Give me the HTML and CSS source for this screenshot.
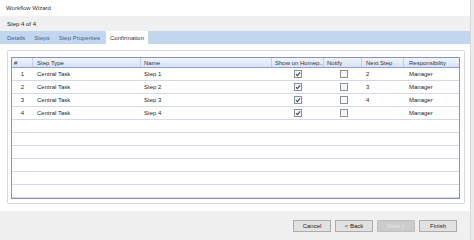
FILE: index.html
```html
<!DOCTYPE html>
<html>
<head>
<meta charset="utf-8">
<link rel="stylesheet" href="styles.css">
</head>
<body>
<div class="window">
  <div class="main">
    <div class="titlebar">Workflow Wizard</div>
    <div class="stepband">Step 4 of 4</div>
    <div class="tabstrip">
      <div class="tab">Details</div>
      <div class="tab">Steps</div>
      <div class="tab">Step Properties</div>
      <div class="tab active">Confirmation</div>
    </div>
    <div class="content">
      <div class="panel">
        <div class="grid">
          <div class="row head">
            <div class="c c1">#</div>
            <div class="c c2">Step Type</div>
            <div class="c c3">Name</div>
            <div class="c c4 hc">Show on Homep..</div>
            <div class="c c5">Notify</div>
            <div class="c c6">Next Step</div>
            <div class="c c7">Responsibility</div>
          </div>
          <div class="row">
            <div class="c c1 num">1</div><div class="c c2">Central Task</div><div class="c c3">Step 1</div>
            <div class="c c4 cb"><svg class="chk" viewBox="0 0 8 8"><rect x="0.5" y="0.5" width="7" height="7" class="box"/><path d="M2 4.2 L3.4 5.6 L6.1 2.3" class="tick"/></svg></div>
            <div class="c c5 cb"><svg class="chk" viewBox="0 0 8 8"><rect x="0.5" y="0.5" width="7" height="7" class="box"/></svg></div>
            <div class="c c6">2</div><div class="c c7">Manager</div>
          </div>
          <div class="row">
            <div class="c c1 num">2</div><div class="c c2">Central Task</div><div class="c c3">Step 2</div>
            <div class="c c4 cb"><svg class="chk" viewBox="0 0 8 8"><rect x="0.5" y="0.5" width="7" height="7" class="box"/><path d="M2 4.2 L3.4 5.6 L6.1 2.3" class="tick"/></svg></div>
            <div class="c c5 cb"><svg class="chk" viewBox="0 0 8 8"><rect x="0.5" y="0.5" width="7" height="7" class="box"/></svg></div>
            <div class="c c6">3</div><div class="c c7">Manager</div>
          </div>
          <div class="row">
            <div class="c c1 num">3</div><div class="c c2">Central Task</div><div class="c c3">Step 3</div>
            <div class="c c4 cb"><svg class="chk" viewBox="0 0 8 8"><rect x="0.5" y="0.5" width="7" height="7" class="box"/><path d="M2 4.2 L3.4 5.6 L6.1 2.3" class="tick"/></svg></div>
            <div class="c c5 cb"><svg class="chk" viewBox="0 0 8 8"><rect x="0.5" y="0.5" width="7" height="7" class="box"/></svg></div>
            <div class="c c6">4</div><div class="c c7">Manager</div>
          </div>
          <div class="row">
            <div class="c c1 num">4</div><div class="c c2">Central Task</div><div class="c c3">Step 4</div>
            <div class="c c4 cb"><svg class="chk" viewBox="0 0 8 8"><rect x="0.5" y="0.5" width="7" height="7" class="box"/><path d="M2 4.2 L3.4 5.6 L6.1 2.3" class="tick"/></svg></div>
            <div class="c c5 cb"><svg class="chk" viewBox="0 0 8 8"><rect x="0.5" y="0.5" width="7" height="7" class="box"/></svg></div>
            <div class="c c6"></div><div class="c c7">Manager</div>
          </div>
          <div class="row empty"></div>
          <div class="row empty"></div>
          <div class="row empty"></div>
          <div class="row empty"></div>
          <div class="row empty"></div>
          <div class="row empty"></div>
        </div>
      </div>
    </div>
    <div class="footer">
      <div class="btn">Cancel</div>
      <div class="btn">&lt; Back</div>
      <div class="btn disabled">Next &gt;</div>
      <div class="btn">Finish</div>
    </div>
  </div>
  <div class="edge"></div>
</div>
</body>
</html>
```
FILE: styles.css
```css
* { box-sizing: border-box; }
html, body { margin: 0; padding: 0; }
body {
  width: 474px;
  height: 240px;
  overflow: hidden;
  background: #ffffff;
  font-family: "Liberation Sans", Arial, sans-serif;
  font-size: 6px;
  color: #262626;
}
.window { display: flex; width: 474px; height: 240px; }
.main { width: 470px; display: flex; flex-direction: column; }
.edge { width: 4px; background: #ececec; border-left: 1px solid #d6d6d6; }

.titlebar {
  height: 16px;
  padding-left: 6px;
  display: flex;
  align-items: center;
  color: #333;
  background: #fff;
}
.stepband {
  height: 16px;
  background: #f0f0f0;
  padding-left: 7px;
  display: flex;
  align-items: center;
  padding-top: 1px;
}
.tabstrip {
  height: 13px;
  background: #c3d6ef;
  display: flex;
  align-items: flex-end;
  padding-left: 7px;
  gap: 9px;
}
.tab {
  flex: none;
  white-space: nowrap;
  height: 13px;
  display: flex;
  align-items: center;
  color: #4a6386;
}
.tab.active {
  margin-left: -4px;
  background: #ffffff;
  color: #333;
  width: 44px;
  justify-content: center;
  border-left: 1px solid #d0d7e2;
  border-right: 1px solid #d0d7e2;
}

.content {
  flex: 1;
  background: #ffffff;
  padding: 6px 5px 7px 7px;
  display: flex;
}
.panel {
  flex: 1;
  border: 1px solid #d6d9de;
  border-radius: 2px;
  padding: 6px 4px 4px 3px;
  display: flex;
}
.grid {
  flex: 1;
  border: 1px solid #8890c0;
  overflow: hidden;
  display: flex;
  flex-direction: column;
}
.row {
  display: flex;
  height: 13px;
  flex: none;
  border-bottom: 1px solid #d3d9e7;
}
.row.head {
  height: 10px;
  background: linear-gradient(#f1f5fc, #d6e2f5);
  border-bottom: 1px solid #8d9fd6;
}
.c {
  display: flex;
  align-items: center;
  padding-left: 4px;
  white-space: nowrap;
  overflow: hidden;
}
.head .c { border-right: 1px solid #c3cde3; color: #333; }
.head .c7 { border-right: none; }
.head .c1 { padding-left: 2px; }
.head .c2 { padding-left: 4px; }
.head .c3 { padding-left: 3px; }
.head .hc { padding-left: 3px; }
.head .c5 { padding-left: 3px; }
.head .c6 { padding-left: 3px; }
.head .c7 { padding-left: 4px; }
.c1 { width: 21px; }
.c2 { width: 108px; }
.c3 { width: 131px; }
.c4 { width: 52px; }
.c5 { width: 38px; }
.c6 { width: 42px; }
.c7 { width: 55px; }
.num { justify-content: center; padding-left: 0; padding-right: 0; }
.row .c2 { padding-left: 4px; }
.row .c3 { padding-left: 3px; }
.row .c6 { padding-left: 4px; }
.row .c7 { padding-left: 5px; }
.cb { justify-content: center; padding-left: 0; }
.row .c5.cb { padding-left: 2px; }
.chk { width: 8px; height: 8px; display: block; }
.chk .box { fill: #f6f7f9; stroke: #8a8f98; stroke-width: 1; }
.chk .tick { fill: none; stroke: #3c4e72; stroke-width: 1.2; }

.footer {
  height: 29px;
  background: #f0f0f0;
  display: flex;
  justify-content: flex-end;
  align-items: flex-start;
  padding-top: 9px;
  padding-right: 13px;
  gap: 4px;
}
.btn {
  width: 38px;
  height: 12px;
  background: #e1e1e1;
  border: 1px solid #adadad;
  display: flex;
  align-items: center;
  justify-content: center;
  color: #222;
}
.btn.disabled { background: #cccccc; border-color: #bfbfbf; color: #e8e8e8; }
```
